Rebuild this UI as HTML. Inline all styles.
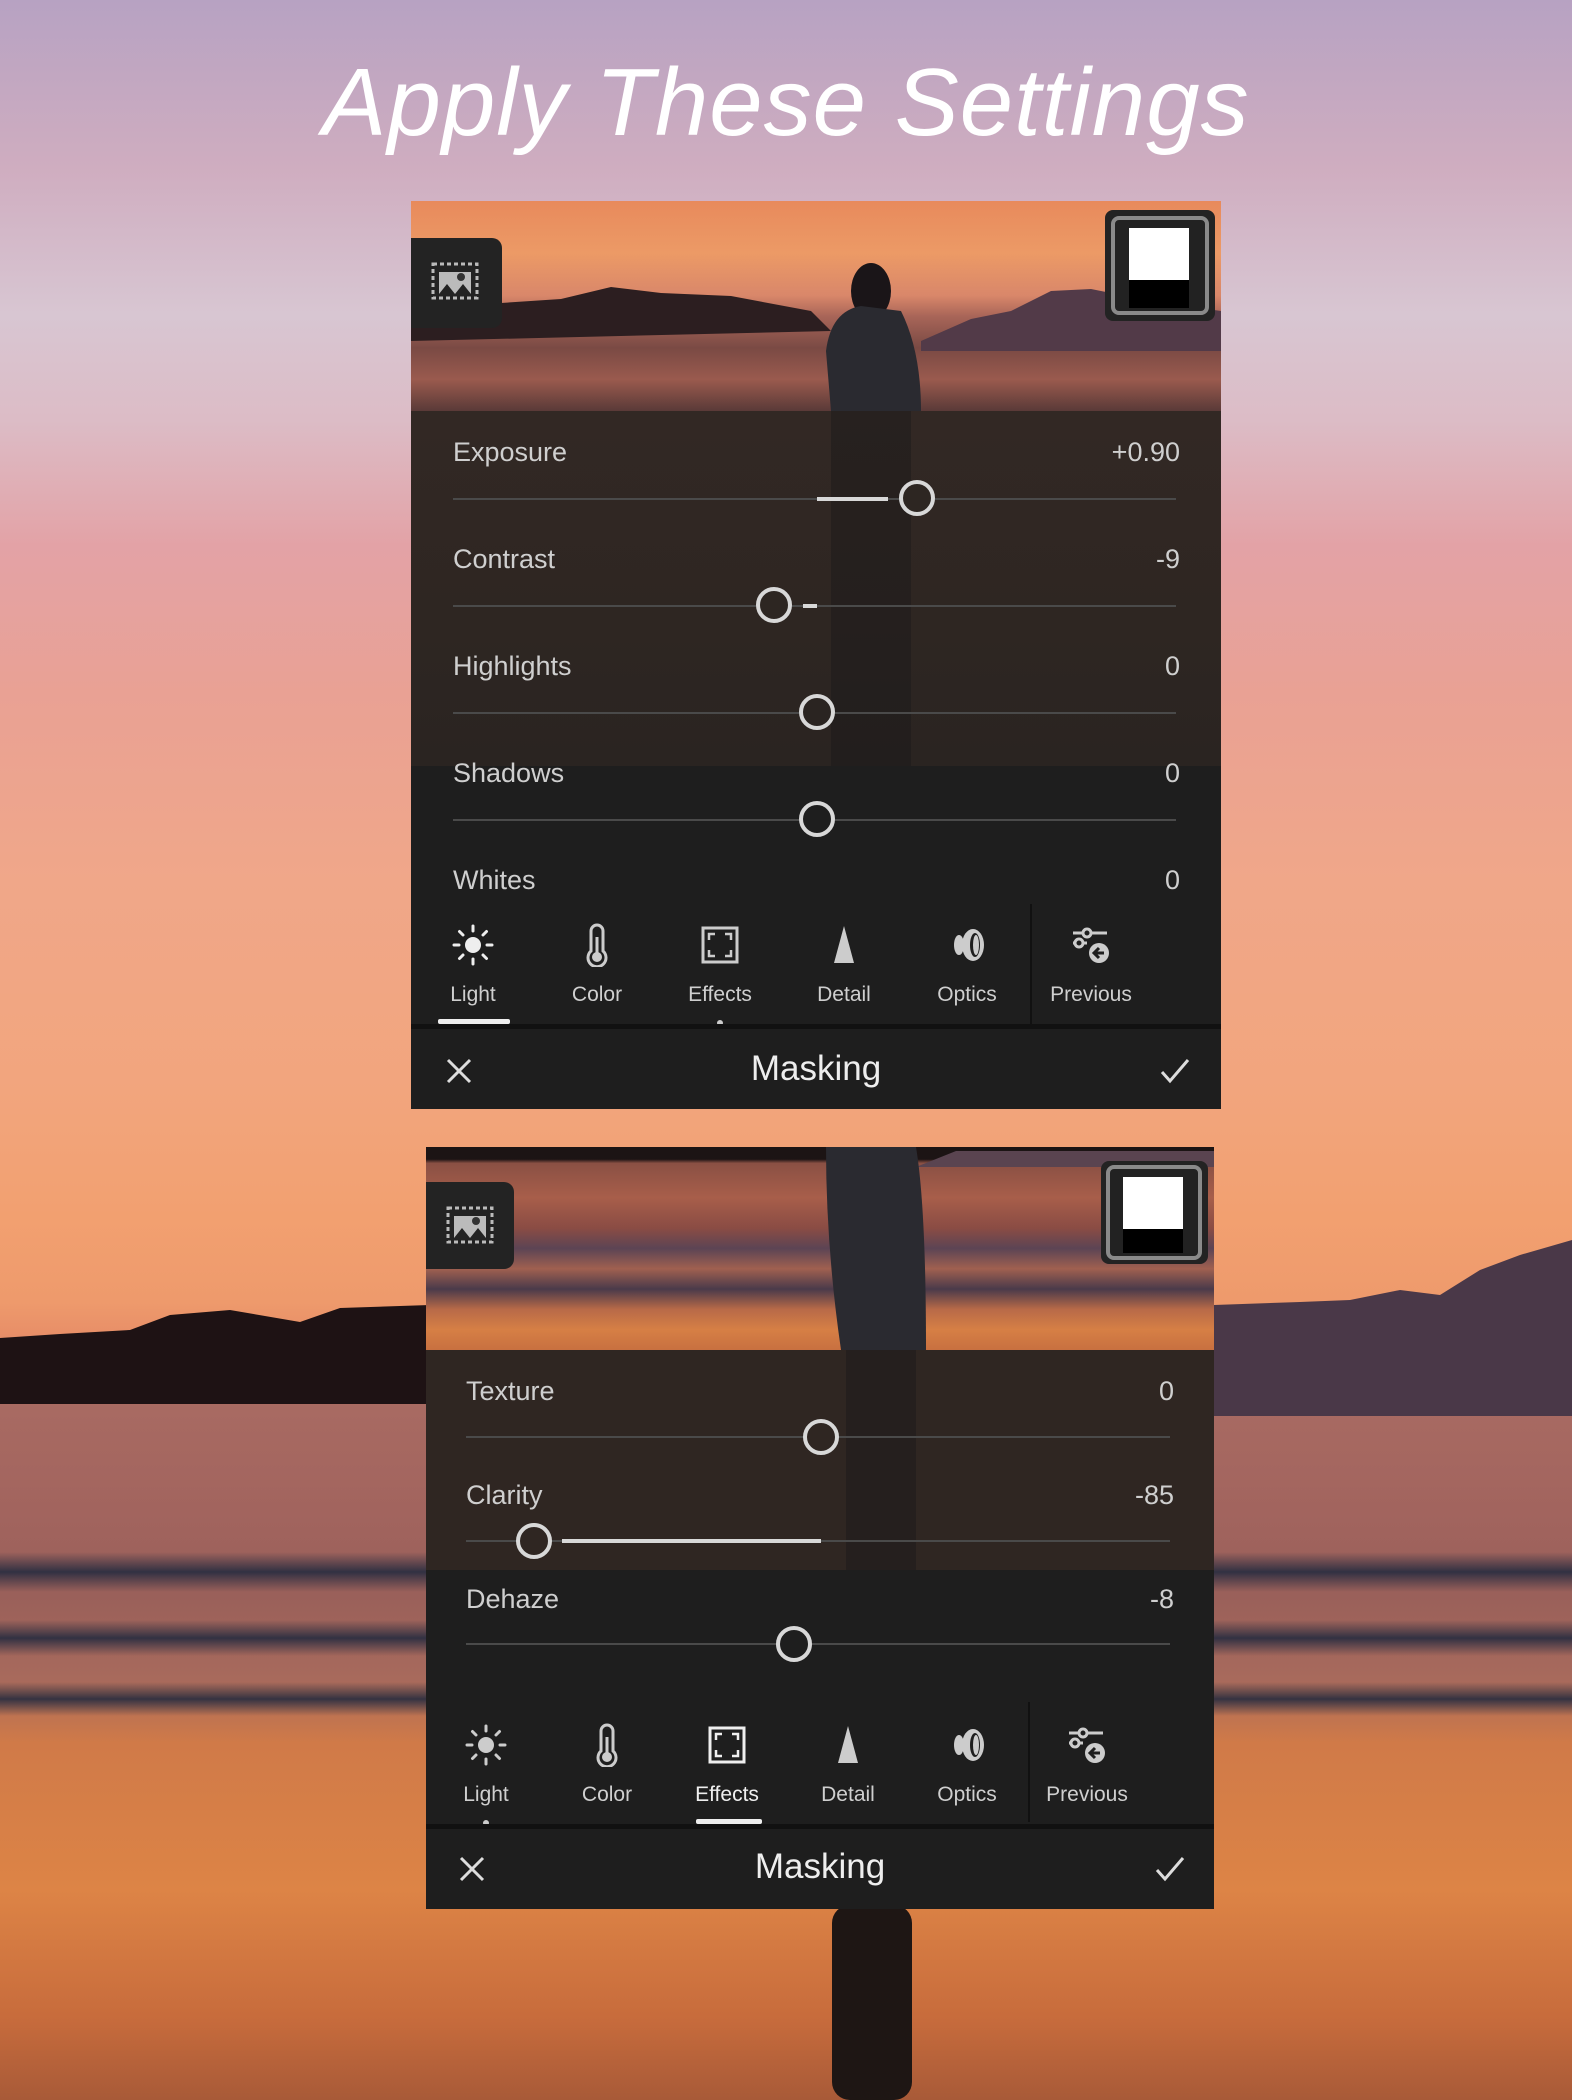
<!DOCTYPE html>
<html><head><meta charset="utf-8">
<style>
*{margin:0;padding:0;box-sizing:border-box}
html,body{width:1572px;height:2100px;overflow:hidden}
body{position:relative;font-family:"Liberation Sans",sans-serif;
background:linear-gradient(180deg,#b7a2c2 0%,#cfadc0 8%,#d8c6d2 15%,#dcbcc6 20%,#e3a2a6 26%,#e9a194 33%,#f0a789 42%,#f2a57d 52%,#f2a070 58%,#ee9a6c 62%,#e88f68 63.5%,#a86a62 67%,#a2645e 72%,#9a605a 76%,#a86a5c 80%,#d07a48 83%,#dd8446 90%,#c86c3c 96%,#a85a38 100%);}
.a{position:absolute}
.title{left:0;width:1572px;top:48px;text-align:center;color:#fff;font-style:italic;font-size:96px;letter-spacing:1px}
.panel{position:absolute;overflow:hidden;background:#1e1e1e}
.lbl{position:absolute;color:#cfcfcf;font-size:27px}
.val{position:absolute;color:#cfcfcf;font-size:27px;text-align:right}
.trk{position:absolute;height:2px;background:#4a4a4a}
.fill{position:absolute;height:4px;background:#d8d8d8}
.knob{position:absolute;width:36px;height:36px;border:4px solid #d8d8d8;border-radius:50%}
.tab{position:absolute;width:120px;text-align:center;color:#cfcfcf;font-size:21px}
.tab svg{display:block;margin:0 auto 16px}
.wave{position:absolute;left:0;width:1572px;background:linear-gradient(180deg,rgba(30,40,60,0),rgba(30,40,62,.85) 50%,rgba(30,40,60,0))}
</style></head><body>

<svg class="a" style="left:0;top:1230px" width="1572" height="190">
<path d="M0 108 L60 104 L130 100 L170 85 L230 80 L300 92 L340 78 L430 75 L430 174 L0 174Z" fill="#1e1214"/>
<path d="M1214 75 L1300 72 L1350 70 L1400 60 L1440 65 L1480 40 L1520 25 L1572 10 L1572 186 L1214 186Z" fill="#4a3848"/>
</svg>
<div class="wave" style="top:1552px;height:40px"></div>
<div class="wave" style="top:1620px;height:36px"></div>
<div class="wave" style="top:1682px;height:34px"></div>
<div class="a" style="left:832px;top:1905px;width:80px;height:195px;background:#1e1614;border-radius:18px"></div>

<div class="a title">Apply These Settings</div>

<!-- PANEL 1 -->
<div class="panel" style="left:411px;top:201px;width:810px;height:908px">
 <div class="a" style="left:0;top:0;width:810px;height:210px;background:linear-gradient(180deg,#e88a5c 0%,#ec9a66 25%,#d9876a 45%,#a86558 55%,#7a4a44 70%,#9a5a4e 85%,#5a3a38 100%)"></div>
 <svg class="a" style="left:0;top:0" width="810" height="210">
  <path d="M90 102 L150 98 L200 86 L250 92 L320 95 L400 110 L420 130 L0 140 L0 105Z" fill="#2c1e20"/>
  <path d="M510 140 L560 118 L600 110 L640 90 L680 88 L740 100 L810 110 L810 150 L510 150Z" fill="#523a48"/>
  <ellipse cx="460" cy="90" rx="20" ry="28" fill="#1a1518"/>
  <path d="M415 150 Q420 110 450 105 L490 110 Q510 150 510 210 L420 210Z" fill="#2a2a30"/>
 </svg>
 <div class="a" style="left:0;top:210px;width:810px;height:355px;background:linear-gradient(180deg,#322824 0%,#2e2622 60%,#2a2421 100%)"></div>
 <div class="a" style="left:420px;top:210px;width:80px;height:355px;background:rgba(20,20,24,.35)"></div>
 <div class="a" style="left:0;top:37px;width:91px;height:90px;background:#232323;border-radius:0 10px 10px 0">
  <svg class="a" style="left:20px;top:24px" width="48" height="42" viewBox="0 0 48 42"><rect x="2" y="2" width="44" height="34" fill="none" stroke="#bbb" stroke-width="3" stroke-dasharray="4 3"/><path d="M8 32 L8 10 L40 10 L40 32 L32 22 L24 32 L16 22Z" fill="#bbb"/><circle cx="30" cy="15" r="4" fill="#333"/></svg>
 </div>
 <div class="a" style="left:694px;top:9px;width:110px;height:111px;background:#232323;border-radius:8px">
  <div class="a" style="left:6px;top:6px;width:98px;height:99px;border:4px solid #8a8a8a;border-radius:8px;background:#222"></div>
  <div class="a" style="left:24px;top:18px;width:60px;height:52px;background:#fff"></div>
  <div class="a" style="left:24px;top:70px;width:60px;height:28px;background:#000"></div>
 </div>
 <div class="lbl" style="left:42px;top:236px">Exposure</div><div class="val" style="right:41px;top:236px">+0.90</div>
 <div class="trk" style="left:42px;top:297px;width:723px"></div>
 <div class="fill" style="left:406px;top:296px;width:71px"></div>
 <div class="knob" style="left:488px;top:279px;background:#2d2622"></div>
 <div class="lbl" style="left:42px;top:343px">Contrast</div><div class="val" style="right:41px;top:343px">-9</div>
 <div class="trk" style="left:42px;top:404px;width:723px"></div>
 <div class="fill" style="left:392px;top:403px;width:14px"></div>
 <div class="knob" style="left:345px;top:386px;background:#2d2622"></div>
 <div class="lbl" style="left:42px;top:450px">Highlights</div><div class="val" style="right:41px;top:450px">0</div>
 <div class="trk" style="left:42px;top:511px;width:723px"></div>
 <div class="knob" style="left:388px;top:493px;background:#2a2421"></div>
 <div class="lbl" style="left:42px;top:557px">Shadows</div><div class="val" style="right:41px;top:557px">0</div>
 <div class="trk" style="left:42px;top:618px;width:723px"></div>
 <div class="knob" style="left:388px;top:600px;background:#1e1e1e"></div>
 <div class="lbl" style="left:42px;top:664px">Whites</div><div class="val" style="right:41px;top:664px">0</div>
 <div class="a" style="left:619px;top:703px;width:2px;height:120px;background:#111"></div>
 <div class="tab" style="left:2px;top:722px">
  <svg width="44" height="44" viewBox="0 0 44 44"><circle cx="22" cy="22" r="8" fill="#eee"/><g stroke="#eee" stroke-width="3" stroke-linecap="round"><path d="M22 3v5M22 36v5M3 22h5M36 22h5M8.5 8.5l3.5 3.5M32 32l3.5 3.5M8.5 35.5l3.5-3.5M32 12l3.5-3.5"/></g></svg>Light</div>
 <div class="tab" style="left:126px;top:722px">
  <svg width="44" height="44" viewBox="0 0 44 44"><path d="M16 28V8a6 6 0 0112 0v20a9 9 0 11-12 0z" fill="none" stroke="#ccc" stroke-width="3"/><circle cx="22" cy="34" r="5" fill="#ccc"/><rect x="20.5" y="14" width="3" height="18" fill="#ccc"/></svg>Color</div>
 <div class="tab" style="left:249px;top:722px">
  <svg width="44" height="44" viewBox="0 0 44 44"><rect x="5" y="5" width="34" height="34" fill="none" stroke="#ccc" stroke-width="3"/><path d="M11 17v-6h6M27 11h6v6M33 27v6h-6M17 33h-6v-6" fill="none" stroke="#ccc" stroke-width="2.5"/></svg>Effects</div>
 <div class="tab" style="left:373px;top:722px">
  <svg width="44" height="44" viewBox="0 0 44 44"><path d="M22 3L32 40H12Z" fill="#ccc"/></svg>Detail</div>
 <div class="tab" style="left:496px;top:722px">
  <svg width="44" height="44" viewBox="0 0 44 44"><ellipse cx="14" cy="22" rx="5" ry="10" fill="#ccc"/><ellipse cx="28" cy="22" rx="11" ry="16" fill="#ccc"/><ellipse cx="30" cy="22" rx="5" ry="12" fill="#1e1e1e"/><ellipse cx="31" cy="22" rx="3" ry="10" fill="#ccc"/></svg>Optics</div>
 <div class="tab" style="left:620px;top:722px">
  <svg width="44" height="44" viewBox="0 0 44 44"><g fill="none" stroke="#ccc" stroke-width="3"><path d="M4 10h10M22 10h16M4 20h2M14 20h4"/><circle cx="18" cy="10" r="4"/><circle cx="10" cy="20" r="4"/></g><circle cx="30" cy="30" r="10" fill="#ccc"/><path d="M35 30h-9M30 25l-5 5 5 5" fill="none" stroke="#1e1e1e" stroke-width="3"/></svg>Previous</div>
 <div class="a" style="left:27px;top:818px;width:72px;height:5px;background:#eee;border-radius:2px"></div>
 <div class="a" style="left:306px;top:819px;width:6px;height:6px;background:#ccc;border-radius:50%"></div>
 <div class="a" style="left:0;top:823px;width:810px;height:5px;background:#111"></div>
 <div class="a" style="left:0;top:848px;width:810px;text-align:center;color:#eee;font-size:35px">Masking</div>
 <svg class="a" style="left:34px;top:856px" width="28" height="28"><path d="M3 3L25 25M25 3L3 25" stroke="#ddd" stroke-width="3"/></svg>
 <svg class="a" style="left:748px;top:856px" width="32" height="28"><path d="M3 15L11 24L29 3" fill="none" stroke="#ddd" stroke-width="3"/></svg>
</div>

<!-- PANEL 2 -->
<div class="panel" style="left:426px;top:1147px;width:788px;height:762px">
 <div class="a" style="left:0;top:0;width:788px;height:203px;background:linear-gradient(180deg,#1c1414 0%,#1c1414 6%,#8a5044 8%,#a85e4a 25%,#8a4c44 40%,#5c4454 50%,#a06050 60%,#4a3a4a 70%,#b86a48 80%,#d67f45 90%,#c87040 100%)"></div>
 <svg class="a" style="left:0;top:0" width="788" height="203">
  <path d="M490 20 L530 4 L788 4 L788 20Z" fill="#5a4450"/>
  <path d="M400 0 L490 0 Q500 60 500 203 L415 203 Q400 100 400 0Z" fill="#2a2a30"/>
 </svg>
 <div class="a" style="left:0;top:203px;width:788px;height:220px;background:#2f2622"></div>
 <div class="a" style="left:420px;top:203px;width:70px;height:220px;background:rgba(20,20,24,.35)"></div>
 <div class="a" style="left:0;top:35px;width:88px;height:87px;background:#232323;border-radius:0 10px 10px 0">
  <svg class="a" style="left:20px;top:24px" width="48" height="42" viewBox="0 0 48 42"><rect x="2" y="2" width="44" height="34" fill="none" stroke="#bbb" stroke-width="3" stroke-dasharray="4 3"/><path d="M8 32 L8 10 L40 10 L40 32 L32 22 L24 32 L16 22Z" fill="#bbb"/><circle cx="30" cy="15" r="4" fill="#333"/></svg>
 </div>
 <div class="a" style="left:675px;top:14px;width:107px;height:103px;background:#232323;border-radius:8px">
  <div class="a" style="left:5px;top:4px;width:96px;height:95px;border:4px solid #8a8a8a;border-radius:8px;background:#222"></div>
  <div class="a" style="left:22px;top:16px;width:60px;height:52px;background:#fff"></div>
  <div class="a" style="left:22px;top:68px;width:60px;height:24px;background:#000"></div>
 </div>
 <div class="lbl" style="left:40px;top:229px">Texture</div><div class="val" style="right:40px;top:229px">0</div>
 <div class="trk" style="left:40px;top:289px;width:704px"></div>
 <div class="knob" style="left:377px;top:272px;background:#2f2622"></div>
 <div class="lbl" style="left:40px;top:333px">Clarity</div><div class="val" style="right:40px;top:333px">-85</div>
 <div class="trk" style="left:40px;top:393px;width:704px"></div>
 <div class="fill" style="left:136px;top:392px;width:259px"></div>
 <div class="knob" style="left:90px;top:376px;background:#2f2622"></div>
 <div class="lbl" style="left:40px;top:437px">Dehaze</div><div class="val" style="right:40px;top:437px">-8</div>
 <div class="trk" style="left:40px;top:496px;width:704px"></div>
 <div class="knob" style="left:350px;top:479px;background:#1e1e1e"></div>
 <div class="a" style="left:602px;top:555px;width:2px;height:120px;background:#111"></div>
 <div class="tab" style="left:0;top:576px">
  <svg width="44" height="44" viewBox="0 0 44 44"><circle cx="22" cy="22" r="8" fill="#ccc"/><g stroke="#ccc" stroke-width="3" stroke-linecap="round"><path d="M22 3v5M22 36v5M3 22h5M36 22h5M8.5 8.5l3.5 3.5M32 32l3.5 3.5M8.5 35.5l3.5-3.5M32 12l3.5-3.5"/></g></svg>Light</div>
 <div class="tab" style="left:121px;top:576px">
  <svg width="44" height="44" viewBox="0 0 44 44"><path d="M16 28V8a6 6 0 0112 0v20a9 9 0 11-12 0z" fill="none" stroke="#ccc" stroke-width="3"/><circle cx="22" cy="34" r="5" fill="#ccc"/><rect x="20.5" y="14" width="3" height="18" fill="#ccc"/></svg>Color</div>
 <div class="tab" style="left:241px;top:576px;color:#eee">
  <svg width="44" height="44" viewBox="0 0 44 44"><rect x="5" y="5" width="34" height="34" fill="none" stroke="#eee" stroke-width="3"/><path d="M11 17v-6h6M27 11h6v6M33 27v6h-6M17 33h-6v-6" fill="none" stroke="#eee" stroke-width="2.5"/></svg>Effects</div>
 <div class="tab" style="left:362px;top:576px">
  <svg width="44" height="44" viewBox="0 0 44 44"><path d="M22 3L32 40H12Z" fill="#ccc"/></svg>Detail</div>
 <div class="tab" style="left:481px;top:576px">
  <svg width="44" height="44" viewBox="0 0 44 44"><ellipse cx="14" cy="22" rx="5" ry="10" fill="#ccc"/><ellipse cx="28" cy="22" rx="11" ry="16" fill="#ccc"/><ellipse cx="30" cy="22" rx="5" ry="12" fill="#1e1e1e"/><ellipse cx="31" cy="22" rx="3" ry="10" fill="#ccc"/></svg>Optics</div>
 <div class="tab" style="left:601px;top:576px">
  <svg width="44" height="44" viewBox="0 0 44 44"><g fill="none" stroke="#ccc" stroke-width="3"><path d="M4 10h10M22 10h16M4 20h2M14 20h4"/><circle cx="18" cy="10" r="4"/><circle cx="10" cy="20" r="4"/></g><circle cx="30" cy="30" r="10" fill="#ccc"/><path d="M35 30h-9M30 25l-5 5 5 5" fill="none" stroke="#1e1e1e" stroke-width="3"/></svg>Previous</div>
 <div class="a" style="left:270px;top:672px;width:66px;height:5px;background:#eee;border-radius:2px"></div>
 <div class="a" style="left:57px;top:673px;width:6px;height:6px;background:#ccc;border-radius:50%"></div>
 <div class="a" style="left:0;top:677px;width:788px;height:5px;background:#111"></div>
 <div class="a" style="left:0;top:700px;width:788px;text-align:center;color:#eee;font-size:35px">Masking</div>
 <svg class="a" style="left:32px;top:708px" width="28" height="28"><path d="M3 3L25 25M25 3L3 25" stroke="#ddd" stroke-width="3"/></svg>
 <svg class="a" style="left:728px;top:708px" width="32" height="28"><path d="M3 15L11 24L29 3" fill="none" stroke="#ddd" stroke-width="3"/></svg>
</div>
</body></html>
